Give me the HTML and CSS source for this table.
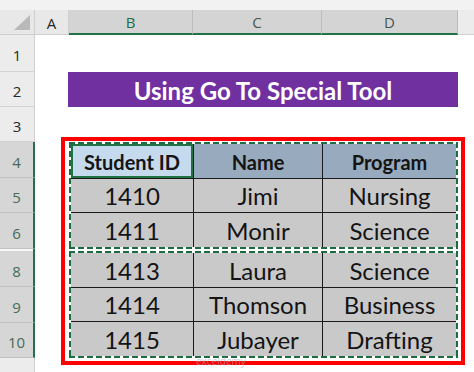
FILE: index.html
```html
<!DOCTYPE html>
<html>
<head>
<meta charset="utf-8">
<link rel="stylesheet" href="styles.css">
</head>
<body>
<div class="sheet">
  <div class="topstrip"></div>

  <div class="corner"><span class="tri"></span></div>
  <div class="ch">A</div>
  <div class="ch sel active">B</div>
  <div class="ch sel">C</div>
  <div class="ch sel">D</div>
  <div class="ch rest"></div>

  <div class="rh r1">1</div>
  <div class="rh r2">2</div>
  <div class="rh r3">3</div>
  <div class="rh sel r4">4</div>
  <div class="rh sel r5">5</div>
  <div class="rh sel r6">6</div>
  <div class="rh hidden r7"></div>
  <div class="rh sel r8">8</div>
  <div class="rh sel r9">9</div>
  <div class="rh sel r10">10</div>
  <div class="rh tail"></div>

  <div class="banner">Using Go To Special Tool</div>

  <div class="table">
    <div class="area">
      <div class="cell head activecell">Student ID</div>
      <div class="cell head">Name</div>
      <div class="cell head">Program</div>
      <div class="cell">1410</div>
      <div class="cell">Jimi</div>
      <div class="cell">Nursing</div>
      <div class="cell">1411</div>
      <div class="cell">Monir</div>
      <div class="cell">Science</div>
    </div>
    <div class="area">
      <div class="cell">1413</div>
      <div class="cell">Laura</div>
      <div class="cell">Science</div>
      <div class="cell">1414</div>
      <div class="cell">Thomson</div>
      <div class="cell">Business</div>
      <div class="cell">1415</div>
      <div class="cell">Jubayer</div>
      <div class="cell">Drafting</div>
    </div>
  </div>

  <div class="redbox"></div>
  <div class="watermark">exceldemy</div>
</div>
</body>
</html>
```

FILE: styles.css
```css
html, body {
  margin: 0;
  padding: 0;
  background: #ffffff;
}

.sheet {
  position: relative;
  width: 474px;
  height: 372px;
  overflow: hidden;
  display: grid;
  grid-template-columns: 35px 34px 124px 129px 136px 1fr;
  grid-template-rows: 10px 25px 37px 35px 35px 36px 35px 36px 2px 36px 36px 35px 1fr;
  font-family: "Open Sans", "Liberation Sans", sans-serif;
}

.topstrip {
  grid-column: 1 / -1;
  grid-row: 1;
  background: #f2f2f2;
}

.corner {
  grid-column: 1;
  grid-row: 2;
  background: #e8e8e8;
  border-right: 1px solid #cfcfcf;
  border-bottom: 1px solid #cfcfcf;
  position: relative;
}

.tri {
  position: absolute;
  right: 4px;
  bottom: 4px;
  width: 0;
  height: 0;
  border-left: 16px solid transparent;
  border-bottom: 15px solid #b9b9b9;
}

.ch {
  grid-row: 2;
  background: #e8e8e8;
  border-right: 1px solid #cfcfcf;
  border-bottom: 1px solid #cfcfcf;
  display: flex;
  align-items: center;
  justify-content: center;
  font-size: 15px;
  color: #262626;
  padding-top: 1px;
}

.ch.sel {
  background: #d4d4d4;
  border-right: 1px solid #bdbdbd;
  border-bottom: 2px solid #217346;
  color: #43594c;
}

.ch.active {
  color: #236c45;
}

.ch.rest {
  background: #ececec;
  border-right: none;
}

.rh {
  grid-column: 1;
  background: #ececec;
  border-bottom: 1px solid #d2d2d2;
  border-right: 1px solid #cfcfcf;
  display: flex;
  align-items: center;
  justify-content: center;
  font-size: 15px;
  color: #262626;
  padding-top: 4px;
  box-sizing: border-box;
}

.rh.sel {
  background: #d6d6d6;
  border-right: 2px solid #217346;
  border-bottom: 1px solid #c2c2c2;
  color: #456b56;
}

.rh.hidden {
  background: #f6f6f6;
  border-bottom: none;
  border-right: 2px solid #217346;
  padding: 0;
}

.rh.tail {
  border-bottom: none;
}

.r1 { grid-row: 3; }
.r2 { grid-row: 4; }
.r3 { grid-row: 5; }
.r4 { grid-row: 6; }
.r5 { grid-row: 7; }
.r6 { grid-row: 8; }
.r7 { grid-row: 9; }
.r8 { grid-row: 10; }
.r9 { grid-row: 11; }
.r10 { grid-row: 12; }
.tail { grid-row: 13; }

.banner {
  grid-column: 3 / 6;
  grid-row: 4;
  margin-left: -1px;
  background: #7030a0;
  color: #ffffff;
  font-family: Lato, "Open Sans", sans-serif;
  font-weight: 700;
  font-size: 24px;
  display: flex;
  align-items: center;
  justify-content: center;
  padding-top: 1px;
}

.table {
  grid-column: 3 / 6;
  grid-row: 6 / 13;
  display: flex;
  flex-direction: column;
  gap: 2px;
  font-family: Lato, "Open Sans", sans-serif;
  color: #141414;
}

.area {
  flex: 1;
  border: 2px solid transparent;
  display: grid;
  grid-template-columns: 122px 128px 133px;
  grid-template-rows: 1fr 1fr 1fr;
  gap: 1px;
  background:
    repeating-linear-gradient(90deg, #1d6b41 0 6px, #ffffff 6px 9px) left top / 100% 2px no-repeat border-box,
    repeating-linear-gradient(90deg, #1d6b41 0 6px, #ffffff 6px 9px) left bottom / 100% 2px no-repeat border-box,
    repeating-linear-gradient(180deg, #1d6b41 0 6px, #ffffff 6px 9px) left top / 2px 100% no-repeat border-box,
    repeating-linear-gradient(180deg, #1d6b41 0 6px, #ffffff 6px 9px) right top / 2px 100% no-repeat border-box,
    linear-gradient(#1a1a1a, #1a1a1a) padding-box;
}

.cell {
  background: #c9c9c9;
  display: flex;
  align-items: center;
  justify-content: center;
  font-size: 24px;
  line-height: 24px;
  padding-top: 2px;
}

.cell.head {
  background: #98aabd;
  font-weight: 700;
  font-size: 20px;
  line-height: 20px;
}

.cell.activecell {
  background: #c6daee;
  box-shadow: inset 0 0 0 2px #217346;
}

.redbox {
  position: absolute;
  left: 61px;
  top: 137px;
  width: 396px;
  height: 220px;
  border: 4px solid #ff0000;
  pointer-events: none;
}

.watermark {
  position: absolute;
  left: 196px;
  top: 356px;
  font-family: "Open Sans", sans-serif;
  font-size: 10px;
  line-height: 10px;
  color: #9fb0c8;
  opacity: 0.6;
}
```
